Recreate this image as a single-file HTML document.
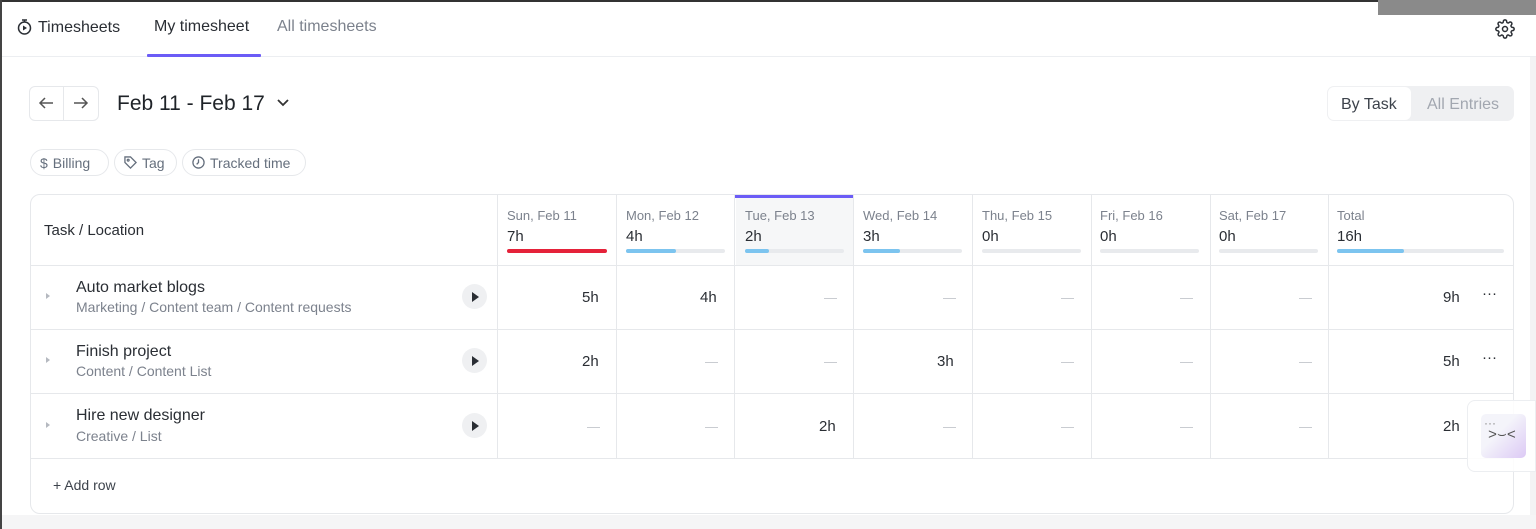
<!DOCTYPE html>
<html><head><style>
*{box-sizing:border-box;margin:0;padding:0}
body{width:1536px;height:529px;overflow:hidden;background:#fff;font-family:"Liberation Sans",sans-serif;color:#2a2e34;position:relative}
.abs{position:absolute}
.topline{left:0;top:0;width:1536px;height:2px;background:#333}
.leftline{left:0;top:0;width:2px;height:529px;background:#444}
.graybar{left:1378px;top:0;width:158px;height:15px;background:#8a8a8a}
.hdr{left:2px;top:2px;width:1534px;height:55px;border-bottom:1px solid #eceef1}
.t{font-size:16px;white-space:nowrap}
.th{font-size:13px;color:#7c828d;white-space:nowrap}
.cell{position:absolute;font-size:15px;color:#2a2e34}
.dash{position:absolute;width:13px;height:1px;background:#c9ccd1}
.bar{position:absolute;height:4px;border-radius:2px;background:#e8eaed}
.pill{position:absolute;top:149px;height:27px;border:1px solid #e6e8eb;border-radius:14px;font-size:14px;color:#656f7d;display:flex;align-items:center;padding:0 9px;gap:5px;white-space:nowrap}
</style></head><body>
<div class="abs topline"></div>
<div class="abs graybar"></div>
<div class="abs hdr"></div>
<div class="abs leftline"></div>
<div class="abs" style="left:1530px;top:57px;width:6px;height:472px;background:#f3f3f4"></div>
<div class="abs" style="left:2px;top:515px;width:1534px;height:14px;background:#f5f5f6"></div>

<svg class="abs" style="left:16px;top:18px" width="17" height="18" viewBox="0 0 17 18"><circle cx="8.5" cy="10" r="6" fill="none" stroke="#2a2e34" stroke-width="1.5"/><path d="M6 2h5M8.5 2v2" stroke="#2a2e34" stroke-width="1.5"/><path d="M7 7.5v5l4-2.5z" fill="#2a2e34"/></svg>
<div class="abs t" style="left:38px;top:19px;color:#2a2e34">Timesheets</div>
<div class="abs t" style="left:154px;top:18px;color:#2a2e34">My timesheet</div>
<div class="abs" style="left:147px;top:54px;width:114px;height:3px;background:#6b5cf6;border-radius:1px"></div>
<div class="abs t" style="left:277px;top:18px;color:#7c828d">All timesheets</div>
<svg class="abs" style="left:1495px;top:19px" width="20" height="20" viewBox="0 0 24 24" fill="none" stroke="#2a2e34" stroke-width="1.8"><circle cx="12" cy="12" r="3"/><path d="M19.4 15a1.65 1.65 0 0 0 .33 1.820l.06.06a2 2 0 1 1-2.83 2.83l-.06-.06a1.65 1.65 0 0 0-1.82-.33 1.65 1.65 0 0 0-1 1.51V21a2 2 0 1 1-4 0v-.09A1.650 1.650 0 0 0 9 19.4a1.65 1.65 0 0 0-1.82.33l-.06.06a2 2 0 1 1-2.83-2.83l.06-.06a1.65 1.65 0 0 0 .33-1.82 1.65 1.65 0 0 0-1.51-1H3a2 2 0 1 1 0-4h.09A1.65 1.65 0 0 0 4.6 9a1.65 1.65 0 0 0-.33-1.82l-.06-.06a2 2 0 1 1 2.83-2.83l.06.06a1.65 1.65 0 0 0 1.82.33H9a1.65 1.65 0 0 0 1-1.51V3a2 2 0 1 1 4 0v.09a1.65 1.65 0 0 0 1 1.51 1.65 1.65 0 0 0 1.82-.33l.06-.06a2 2 0 1 1 2.83 2.83l-.06.06a1.65 1.65 0 0 0-.33 1.82V9a1.65 1.65 0 0 0 1.51 1H21a2 2 0 1 1 0 4h-.09a1.65 1.65 0 0 0-1.51 1z"/></svg>

<div class="abs" style="left:29px;top:86px;width:70px;height:35px;border:1px solid #e6e8eb;border-radius:6px"></div>
<div class="abs" style="left:63px;top:86px;width:1px;height:35px;background:#e6e8eb"></div>
<svg class="abs" style="left:38px;top:96px" width="16" height="14" viewBox="0 0 16 14" fill="none" stroke="#555" stroke-width="1.5"><path d="M15 7H2M7 2L2 7l5 5"/></svg>
<svg class="abs" style="left:73px;top:96px" width="16" height="14" viewBox="0 0 16 14" fill="none" stroke="#555" stroke-width="1.5"><path d="M1 7h13M9 2l5 5-5 5"/></svg>
<div class="abs" style="left:117px;top:92px;font-size:21px;color:#1f2328;white-space:nowrap">Feb 11 - Feb 17</div>
<svg class="abs" style="left:276px;top:98px" width="14" height="10" viewBox="0 0 14 10" fill="none" stroke="#333" stroke-width="1.8"><path d="M2 2l5 5 5-5"/></svg>

<div class="abs" style="left:1327px;top:86px;width:187px;height:35px;background:#eff0f2;border-radius:7px"></div>
<div class="abs" style="left:1328px;top:87px;width:83px;height:33px;background:#fff;border-radius:6px"></div>
<div class="abs t" style="left:1341px;top:96px;color:#3d434c">By Task</div>
<div class="abs t" style="left:1427px;top:96px;color:#a2a7b0">All Entries</div>

<div class="pill" style="left:30px;width:79px"><span style="font-size:14px">$</span>Billing</div>
<div class="pill" style="left:114px;width:63px"><svg width="13" height="13" viewBox="0 0 14 14" fill="none" stroke="#656f7d" stroke-width="1.4"><path d="M1 1h6l6 6-6 6-6-6z"/><circle cx="4.5" cy="4.5" r="1"/></svg>Tag</div>
<div class="pill" style="left:182px;width:124px"><svg width="13" height="13" viewBox="0 0 14 14" fill="none" stroke="#656f7d" stroke-width="1.4"><circle cx="7" cy="7" r="6"/><path d="M7 3.5V7l-2 2"/></svg>Tracked time</div>

<div class="abs" style="left:30px;top:194px;width:1484px;height:320px;border:1px solid #e6e8eb;border-radius:10px"></div>
<div class="abs" style="left:736px;top:195px;width:117px;height:70px;background:#f6f7f8"></div>
<div class="abs" style="left:734px;top:195px;width:120px;height:3px;background:#6b5cf6"></div>
<div class="abs" style="left:31px;top:265px;width:1482px;height:1px;background:#e6e8eb"></div>
<div class="abs" style="left:31px;top:329px;width:1482px;height:1px;background:#e6e8eb"></div>
<div class="abs" style="left:31px;top:393px;width:1482px;height:1px;background:#e6e8eb"></div>
<div class="abs" style="left:31px;top:458px;width:1482px;height:1px;background:#e6e8eb"></div>
<div class="abs" style="left:497px;top:195px;width:1px;height:263px;background:#e6e8eb"></div>
<div class="abs" style="left:616px;top:195px;width:1px;height:263px;background:#e6e8eb"></div>
<div class="abs" style="left:734px;top:195px;width:1px;height:263px;background:#e6e8eb"></div>
<div class="abs" style="left:853px;top:195px;width:1px;height:263px;background:#e6e8eb"></div>
<div class="abs" style="left:972px;top:195px;width:1px;height:263px;background:#e6e8eb"></div>
<div class="abs" style="left:1091px;top:195px;width:1px;height:263px;background:#e6e8eb"></div>
<div class="abs" style="left:1210px;top:195px;width:1px;height:263px;background:#e6e8eb"></div>
<div class="abs" style="left:1328px;top:195px;width:1px;height:263px;background:#e6e8eb"></div>

<div class="abs" style="left:44px;top:222px;font-size:15px;color:#2a2e34">Task / Location</div>

<div class="abs th" style="left:507px;top:208px">Sun, Feb 11</div><div class="abs t" style="left:507px;top:228px;font-size:15px">7h</div><div class="bar" style="left:507px;top:249px;width:100px;background:#e5223a"></div>
<div class="abs th" style="left:626px;top:208px">Mon, Feb 12</div><div class="abs t" style="left:626px;top:228px;font-size:15px">4h</div><div class="bar" style="left:626px;top:249px;width:99px"></div><div class="bar" style="left:626px;top:249px;width:50px;background:#7cc4ef"></div>
<div class="abs th" style="left:745px;top:208px">Tue, Feb 13</div><div class="abs t" style="left:745px;top:228px;font-size:15px">2h</div><div class="bar" style="left:745px;top:249px;width:99px"></div><div class="bar" style="left:745px;top:249px;width:24px;background:#7cc4ef"></div>
<div class="abs th" style="left:863px;top:208px">Wed, Feb 14</div><div class="abs t" style="left:863px;top:228px;font-size:15px">3h</div><div class="bar" style="left:863px;top:249px;width:99px"></div><div class="bar" style="left:863px;top:249px;width:37px;background:#7cc4ef"></div>
<div class="abs th" style="left:982px;top:208px">Thu, Feb 15</div><div class="abs t" style="left:982px;top:228px;font-size:15px">0h</div><div class="bar" style="left:982px;top:249px;width:99px"></div>
<div class="abs th" style="left:1100px;top:208px">Fri, Feb 16</div><div class="abs t" style="left:1100px;top:228px;font-size:15px">0h</div><div class="bar" style="left:1100px;top:249px;width:99px"></div>
<div class="abs th" style="left:1219px;top:208px">Sat, Feb 17</div><div class="abs t" style="left:1219px;top:228px;font-size:15px">0h</div><div class="bar" style="left:1219px;top:249px;width:99px"></div>
<div class="abs th" style="left:1337px;top:208px">Total</div><div class="abs t" style="left:1337px;top:228px;font-size:15px">16h</div><div class="bar" style="left:1337px;top:249px;width:167px"></div><div class="bar" style="left:1337px;top:249px;width:67px;background:#7cc4ef"></div>

<!-- rows -->
<div class="abs" style="left:46px;top:293px;width:0;height:0;border-left:4px solid #b5b9c0;border-top:3.5px solid transparent;border-bottom:3.5px solid transparent"></div>
<div class="abs t" style="left:76px;top:279px">Auto market blogs</div>
<div class="abs" style="left:76px;top:299px;font-size:14px;color:#7c828d;white-space:nowrap">Marketing / Content team / Content requests</div>
<div class="abs" style="left:462px;top:284px;width:25px;height:25px;border-radius:50%;background:#eff0f2"></div>
<div class="abs" style="left:472px;top:292px;border-left:7px solid #2a2e34;border-top:5px solid transparent;border-bottom:5px solid transparent"></div>

<div class="abs" style="left:46px;top:357px;width:0;height:0;border-left:4px solid #b5b9c0;border-top:3.5px solid transparent;border-bottom:3.5px solid transparent"></div>
<div class="abs t" style="left:76px;top:343px">Finish project</div>
<div class="abs" style="left:76px;top:363px;font-size:14px;color:#7c828d">Content / Content List</div>
<div class="abs" style="left:462px;top:348px;width:25px;height:25px;border-radius:50%;background:#eff0f2"></div>
<div class="abs" style="left:472px;top:356px;border-left:7px solid #2a2e34;border-top:5px solid transparent;border-bottom:5px solid transparent"></div>

<div class="abs" style="left:46px;top:422px;width:0;height:0;border-left:4px solid #b5b9c0;border-top:3.5px solid transparent;border-bottom:3.5px solid transparent"></div>
<div class="abs t" style="left:76px;top:407px">Hire new designer</div>
<div class="abs" style="left:76px;top:428px;font-size:14px;color:#7c828d">Creative / List</div>
<div class="abs" style="left:462px;top:413px;width:25px;height:25px;border-radius:50%;background:#eff0f2"></div>
<div class="abs" style="left:472px;top:421px;border-left:7px solid #2a2e34;border-top:5px solid transparent;border-bottom:5px solid transparent"></div>

<!-- row 1 values -->
<div class="cell" style="left:582px;top:289px">5h</div>
<div class="cell" style="left:700px;top:289px">4h</div>
<div class="dash" style="left:824px;top:298px"></div>
<div class="dash" style="left:943px;top:298px"></div>
<div class="dash" style="left:1061px;top:298px"></div>
<div class="dash" style="left:1180px;top:298px"></div>
<div class="dash" style="left:1299px;top:298px"></div>
<div class="cell" style="left:1443px;top:289px">9h</div>
<div class="cell" style="left:1482px;top:285px;letter-spacing:0">···</div>
<!-- row 2 -->
<div class="cell" style="left:582px;top:353px">2h</div>
<div class="dash" style="left:705px;top:362px"></div>
<div class="dash" style="left:824px;top:362px"></div>
<div class="cell" style="left:937px;top:353px">3h</div>
<div class="dash" style="left:1061px;top:362px"></div>
<div class="dash" style="left:1180px;top:362px"></div>
<div class="dash" style="left:1299px;top:362px"></div>
<div class="cell" style="left:1443px;top:353px">5h</div>
<div class="cell" style="left:1482px;top:349px;letter-spacing:0">···</div>
<!-- row 3 -->
<div class="dash" style="left:587px;top:427px"></div>
<div class="dash" style="left:705px;top:427px"></div>
<div class="cell" style="left:819px;top:418px">2h</div>
<div class="dash" style="left:943px;top:427px"></div>
<div class="dash" style="left:1061px;top:427px"></div>
<div class="dash" style="left:1180px;top:427px"></div>
<div class="dash" style="left:1299px;top:427px"></div>
<div class="cell" style="left:1443px;top:418px">2h</div>

<div class="abs" style="left:1467px;top:400px;width:69px;height:72px;border:1px solid #eceef1;border-radius:8px 0 0 8px;background:rgba(255,255,255,.85)"></div>
<div class="abs" style="left:1481px;top:414px;width:45px;height:44px;border-radius:5px;background:linear-gradient(135deg,#f4f4fa 40%,#dcc9f5)"></div>
<div class="abs" style="left:1484px;top:416px;font-size:12px;color:#888">···</div>
<div class="abs" style="left:1488px;top:426px;font-size:15px;color:#555;font-family:'Liberation Mono',monospace">&gt;&#x2323;&lt;</div>

<div class="abs" style="left:53px;top:477px;font-size:14px;color:#3d434c">+ Add row</div>
</body></html>
